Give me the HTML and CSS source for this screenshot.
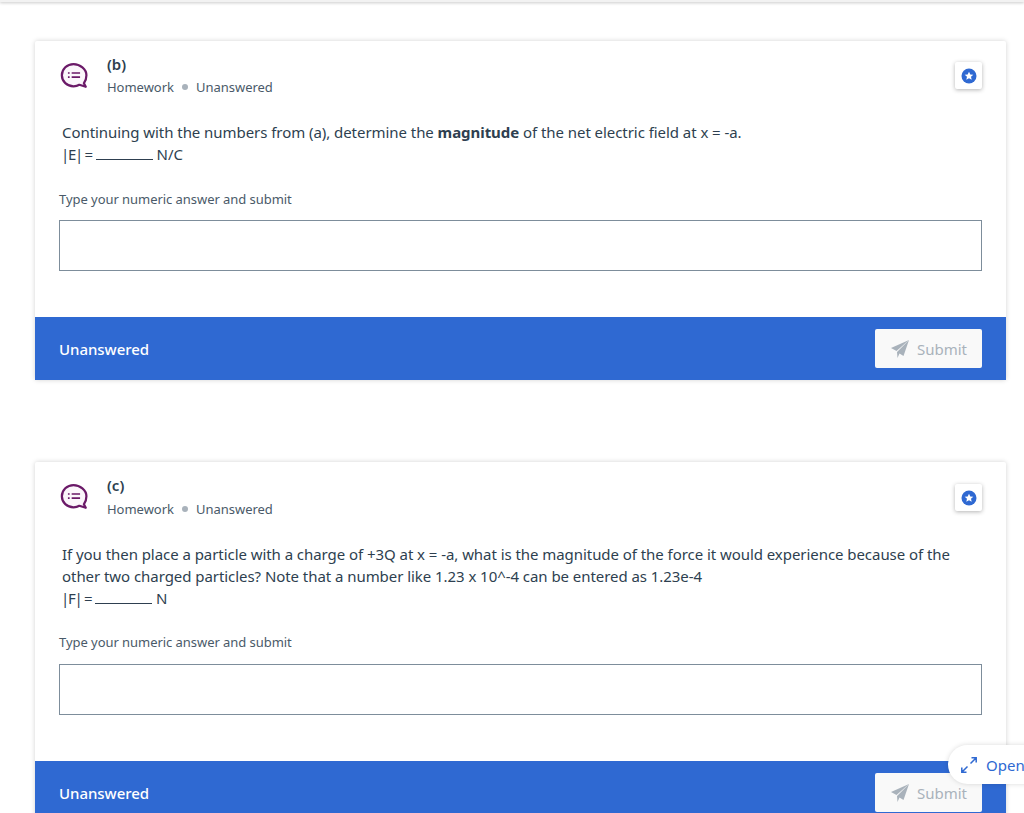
FILE: index.html
```html
<!DOCTYPE html>
<html lang="en">
<head>
<meta charset="utf-8">
<title>Homework</title>
<link rel="stylesheet" href="styles.css">
</head>
<body>
<div class="topbar"></div>
<main class="list">
  <section class="card">
    <div class="body">
      <header class="head">
        <svg class="qicon" viewBox="0 0 30 30" width="28" height="28"><path d="M14.500 2.200C7.600 2.200 2 7.500 2 14.200S7.600 26 14.500 26c2.400 0 4.400-.5 6.200-1.600l6.900 2.100-2-3.800c1.700-2.100 2.700-5 2.700-8.500C28.300 7.500 21.400 2.200 14.500 2.200z" fill="#fbf6fb" stroke="#6b1a68" stroke-width="2.400" stroke-linejoin="round"/><path d="M8.500 11.800h1.800M8.500 16.200h1.800M12.500 11.800h9M12.500 16.200h9" stroke="#6b1a68" stroke-width="1.800" fill="none"/></svg>
        <div class="titles">
          <div class="part">(b)</div>
          <div class="meta"><span>Homework</span><i class="dot"></i><span>Unanswered</span></div>
        </div>
        <button class="star"><svg viewBox="0 0 16 16" width="16" height="16"><circle cx="8" cy="8" r="7.500" fill="#2f69d2"/><path d="M8 3.700l1.300 2.800 3 .3-2.300 2 .7 3L8 10.200l-2.700 1.600.7-3-2.300-2 3-.3z" fill="#fff"/></svg></button>
      </header>
      <div class="question">
        <p>Continuing with the numbers from (a), determine the <b>magnitude</b> of the net electric field at x = -a.</p>
        <p><span class="sym">|E| =</span> <span class="blank"></span> N/C</p>
      </div>
      <label class="prompt">Type your numeric answer and submit</label>
      <div class="input"></div>
    </div>
    <footer class="foot">
      <span class="status">Unanswered</span>
      <button class="submit"><svg viewBox="0 0 20 20" width="20" height="20"><path d="M19 1L1 9l5.500 3z" fill="#a9b2bb"/><path d="M19 1L7 13l.5 6 2-4.500 4 2.500z" fill="#a9b2bb"/></svg><span>Submit</span></button>
    </footer>
  </section>
  <section class="card second">
    <div class="body">
      <header class="head">
        <svg class="qicon" viewBox="0 0 30 30" width="28" height="28"><path d="M14.500 2.200C7.600 2.200 2 7.500 2 14.200S7.600 26 14.500 26c2.400 0 4.400-.5 6.200-1.600l6.900 2.100-2-3.800c1.700-2.100 2.700-5 2.700-8.500C28.300 7.500 21.400 2.200 14.500 2.200z" fill="#fbf6fb" stroke="#6b1a68" stroke-width="2.400" stroke-linejoin="round"/><path d="M8.500 11.800h1.800M8.500 16.200h1.800M12.500 11.800h9M12.500 16.200h9" stroke="#6b1a68" stroke-width="1.800" fill="none"/></svg>
        <div class="titles">
          <div class="part">(c)</div>
          <div class="meta"><span>Homework</span><i class="dot"></i><span>Unanswered</span></div>
        </div>
        <button class="star"><svg viewBox="0 0 16 16" width="16" height="16"><circle cx="8" cy="8" r="7.500" fill="#2f69d2"/><path d="M8 3.700l1.300 2.800 3 .3-2.300 2 .7 3L8 10.200l-2.700 1.600.7-3-2.300-2 3-.3z" fill="#fff"/></svg></button>
      </header>
      <div class="question">
        <p>If you then place a particle with a charge of +3Q at x = -a, what is the magnitude of the force it would experience because of the other two charged particles? Note that a number like 1.23 x 10^-4 can be entered as 1.23e-4</p>
        <p><span class="sym">|F| =</span> <span class="blank"></span> N</p>
      </div>
      <label class="prompt">Type your numeric answer and submit</label>
      <div class="input"></div>
    </div>
    <footer class="foot">
      <span class="status">Unanswered</span>
      <button class="submit"><svg viewBox="0 0 20 20" width="20" height="20"><path d="M19 1L1 9l5.500 3z" fill="#a9b2bb"/><path d="M19 1L7 13l.5 6 2-4.500 4 2.500z" fill="#a9b2bb"/></svg><span>Submit</span></button>
    </footer>
  </section>
</main>
<button class="open"><svg viewBox="0 0 18 18" width="18" height="18"><path d="M10.500 7.500L16 2M11.500 1.800h4.700v4.700M7.500 10.500L2 16M6.500 16.200H1.800v-4.700" fill="none" stroke="#2f69d2" stroke-width="1.500"/></svg><span>Open</span></button>
</body>
</html>
```
FILE: styles.css
```css
* { box-sizing: border-box; }
html, body { margin: 0; height: 813px; overflow: hidden; background: #fff; }
body { font-family: "Noto Sans", "Open Sans", sans-serif; color: #2e3f50; position: relative; }
.topbar { height: 2px; background: #f2f2f2; box-shadow: 0 1px 3px rgba(0,0,0,.25); }
.list { padding: 39px 18px 0 35px; display: flex; flex-direction: column; gap: 82px; }
.card { background: #fff; border-radius: 2px; box-shadow: 0 0 5px rgba(0,0,0,.18); }
.body { padding: 14px 24px 0; height: 276px; }
.second .body { height: 299px; }
.head { display: flex; align-items: flex-start; position: relative; height: 48px; }
.qicon { margin: 7px 0 0 1px; flex: none; }
.titles { margin-left: 19px; }
.part { margin-top: -1px; font-size: 15px; font-weight: 600; line-height: 20px; }
.meta { margin-top: 3px; font-size: 13px; line-height: 20px; letter-spacing: -.02px; color: #4a5a69; display: flex; align-items: center; }
.second .meta { margin-top: 4px; }
.dot { width: 6px; height: 6px; border-radius: 50%; background: #a9b2bb; margin: 0 8px; }
.star { position: absolute; right: 0; top: 7px; width: 27px; height: 27px; border: 0; padding: 0; background: #fff; border-radius: 2px; box-shadow: 0 1px 4px rgba(0,0,0,.3); display: flex; align-items: center; justify-content: center; }
.second .star { top: 8px; }
.question { margin: 18px 0 0 3px; font-size: 15px; line-height: 22px; letter-spacing: -.055px; color: #2e3f50; }
.second .question { margin-top: 19px; }
.question p { margin: 0; }
.sym { margin-left: -1px; letter-spacing: -1.3px; }
.blank { display: inline-block; width: 57px; border-bottom: 1px solid #2e3f50; vertical-align: baseline; }
.prompt { display: block; margin-top: 24px; font-size: 13px; line-height: 20px; letter-spacing: -.05px; color: #4a5a69; }
.second .prompt { margin-top: 23px; }
.input { margin-top: 11px; height: 51px; border: 1px solid #7d8d9b; background: #fff; }
.second .input { margin-top: 12px; }
.foot { height: 63px; background: #2f69d2; display: flex; align-items: center; justify-content: space-between; padding: 0 24px; }
.status { color: #fff; font-size: 15px; font-weight: 500; letter-spacing: -.03px; }
.submit { width: 107px; height: 39px; background: #f9f9f9; border: 0; border-radius: 2px; display: flex; align-items: center; justify-content: center; gap: 7px; font: 15px "Noto Sans", sans-serif; color: #a9b2bb; padding: 0; }
.open { position: absolute; left: 948px; top: 745px; width: 90px; height: 39px; border: 0; border-radius: 20px 0 0 20px; background: #fff; box-shadow: 0 0 5px rgba(0,0,0,.15); display: flex; align-items: center; gap: 8px; padding: 0 0 0 12px; font: 15px "Noto Sans", sans-serif; color: #2f69d2; }
```
